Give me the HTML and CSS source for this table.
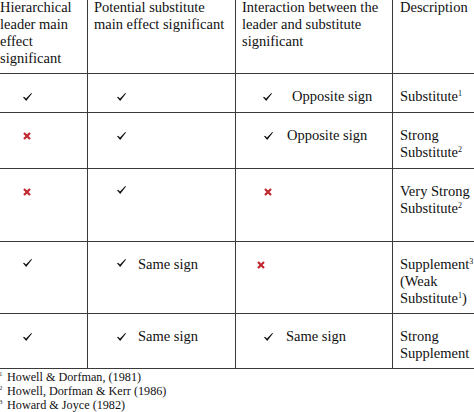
FILE: index.html
```html
<!DOCTYPE html>
<html>
<head>
<meta charset="utf-8">
<link rel="stylesheet" href="styles.css">
</head>
<body>
<div class="page">
  <div class="grid">
    <div class="c h c1">Hierarchical leader main effect significant</div>
    <div class="c h c2">Potential substitute main effect significant</div>
    <div class="c h c3">Interaction between the leader and substitute significant</div>
    <div class="c h c4">Description</div>

    <div class="c b c1"><span class="ic m30"><svg class="chk" viewBox="0 0 9 8"><path d="M0 4.3 L1.1 3.7 L3 5.6 L8.3 0 L9 0.5 L3.2 7.9 Z"/></svg></span></div>
    <div class="c b c2"><span class="ic m29"><svg class="chk" viewBox="0 0 9 8"><path d="M0 4.3 L1.1 3.7 L3 5.6 L8.3 0 L9 0.5 L3.2 7.9 Z"/></svg></span></div>
    <div class="c b c3"><span class="ic m27"><svg class="chk" viewBox="0 0 9 8"><path d="M0 4.3 L1.1 3.7 L3 5.6 L8.3 0 L9 0.5 L3.2 7.9 Z"/></svg></span><span class="g20">Opposite sign</span></div>
    <div class="c b c4">Substitute<sup>1</sup></div>

    <div class="c b c1"><span class="ic m30"><svg class="crs" viewBox="0 0 8 8"><path d="M1 1 L7 7 M7 1 L1 7"/></svg></span></div>
    <div class="c b c2"><span class="ic m29"><svg class="chk" viewBox="0 0 9 8"><path d="M0 4.3 L1.1 3.7 L3 5.6 L8.3 0 L9 0.5 L3.2 7.9 Z"/></svg></span></div>
    <div class="c b c3"><span class="ic m28"><svg class="chk" viewBox="0 0 9 8"><path d="M0 4.3 L1.1 3.7 L3 5.6 L8.3 0 L9 0.5 L3.2 7.9 Z"/></svg></span><span class="g14">Opposite sign</span></div>
    <div class="c b c4">Strong Substitute<sup>2</sup></div>

    <div class="c b c1"><span class="ic m30"><svg class="crs" viewBox="0 0 8 8"><path d="M1 1 L7 7 M7 1 L1 7"/></svg></span></div>
    <div class="c b c2"><span class="ic m29 up"><svg class="chk" viewBox="0 0 9 8"><path d="M0 4.3 L1.1 3.7 L3 5.6 L8.3 0 L9 0.5 L3.2 7.9 Z"/></svg></span></div>
    <div class="c b c3"><span class="ic m28"><svg class="crs" viewBox="0 0 8 8"><path d="M1 1 L7 7 M7 1 L1 7"/></svg></span></div>
    <div class="c b c4">Very Strong Substitute<sup>2</sup></div>

    <div class="c b c1"><span class="ic m30 up"><svg class="chk" viewBox="0 0 9 8"><path d="M0 4.3 L1.1 3.7 L3 5.6 L8.3 0 L9 0.5 L3.2 7.9 Z"/></svg></span></div>
    <div class="c b c2"><span class="ic m29 up"><svg class="chk" viewBox="0 0 9 8"><path d="M0 4.3 L1.1 3.7 L3 5.6 L8.3 0 L9 0.5 L3.2 7.9 Z"/></svg></span><span class="g12">Same sign</span></div>
    <div class="c b c3"><span class="ic m21"><svg class="crs" viewBox="0 0 8 8"><path d="M1 1 L7 7 M7 1 L1 7"/></svg></span></div>
    <div class="c b c4">Supplement<sup>3</sup> (Weak Substitute<sup>1</sup>)</div>

    <div class="c b c1"><span class="ic m30"><svg class="chk" viewBox="0 0 9 8"><path d="M0 4.3 L1.1 3.7 L3 5.6 L8.3 0 L9 0.5 L3.2 7.9 Z"/></svg></span></div>
    <div class="c b c2"><span class="ic m29"><svg class="chk" viewBox="0 0 9 8"><path d="M0 4.3 L1.1 3.7 L3 5.6 L8.3 0 L9 0.5 L3.2 7.9 Z"/></svg></span><span class="g12">Same sign</span></div>
    <div class="c b c3"><span class="ic m28"><svg class="chk" viewBox="0 0 9 8"><path d="M0 4.3 L1.1 3.7 L3 5.6 L8.3 0 L9 0.5 L3.2 7.9 Z"/></svg></span><span class="g13">Same sign</span></div>
    <div class="c b c4">Strong Supplement</div>
  </div>

  <div class="notes">
    <div class="fn"><span class="num">1</span><span>Howell &amp; Dorfman, (1981)</span></div>
    <div class="fn"><span class="num">2</span><span>Howell, Dorfman &amp; Kerr (1986)</span></div>
    <div class="fn"><span class="num">3</span><span>Howard &amp; Joyce (1982)</span></div>
  </div>
</div>
</body>
</html>
```

FILE: styles.css
```css
html, body {
  margin: 0;
  padding: 0;
  background: #ffffff;
}

body {
  width: 474px;
  height: 412px;
  overflow: hidden;
  font-family: "Liberation Serif", "Times New Roman", serif;
  color: #111111;
}

.page {
  margin-left: -7px;
  margin-top: -1px;
  width: 500px;
}

.grid {
  display: grid;
  grid-template-columns: 95px 148px 157px 100px;
  grid-template-rows: 75px 39px 56px 73px 72px 55px;
}

.c {
  box-sizing: border-box;
  border-right: 1px solid #3a3a3a;
  border-bottom: 1px solid #3a3a3a;
  font-size: 14.5px;
  line-height: 17px;
}

.h {
  padding: 0 2px 0 6px;
}

.h.c1 {
  padding-left: 7px;
}

.h.c4 {
  padding-left: 7px;
}

.b {
  padding-top: 14px;
  white-space: nowrap;
}

.b.c4 {
  padding-left: 7px;
  padding-right: 4px;
  white-space: normal;
}

.c4 {
  border-right: none;
}

.ic {
  display: inline-block;
  line-height: 0;
  vertical-align: baseline;
}

.ic.up {
  position: relative;
  top: -2px;
}

.m21 { margin-left: 21px; }
.m27 { margin-left: 27px; }
.m28 { margin-left: 28px; }
.m29 { margin-left: 29px; }
.m30 { margin-left: 30px; }

.g12 { margin-left: 12px; }
.g13 { margin-left: 13px; }
.g14 { margin-left: 14px; }
.g20 { margin-left: 20px; }

.chk {
  width: 9px;
  height: 8px;
  display: block;
  fill: #111111;
}

.crs {
  width: 8px;
  height: 8px;
  display: block;
  fill: none;
  stroke: #c0262c;
  stroke-width: 2.2;
}

sup {
  font-size: 8px;
  line-height: 0;
  vertical-align: 5px;
}

.notes {
  padding-top: 1px;
  padding-left: 6px;
  font-size: 12.2px;
  line-height: 14px;
}

.fn {
  display: flex;
  align-items: flex-start;
}

.num {
  width: 8px;
  font-size: 7px;
  line-height: 8px;
  color: #333333;
}
```
